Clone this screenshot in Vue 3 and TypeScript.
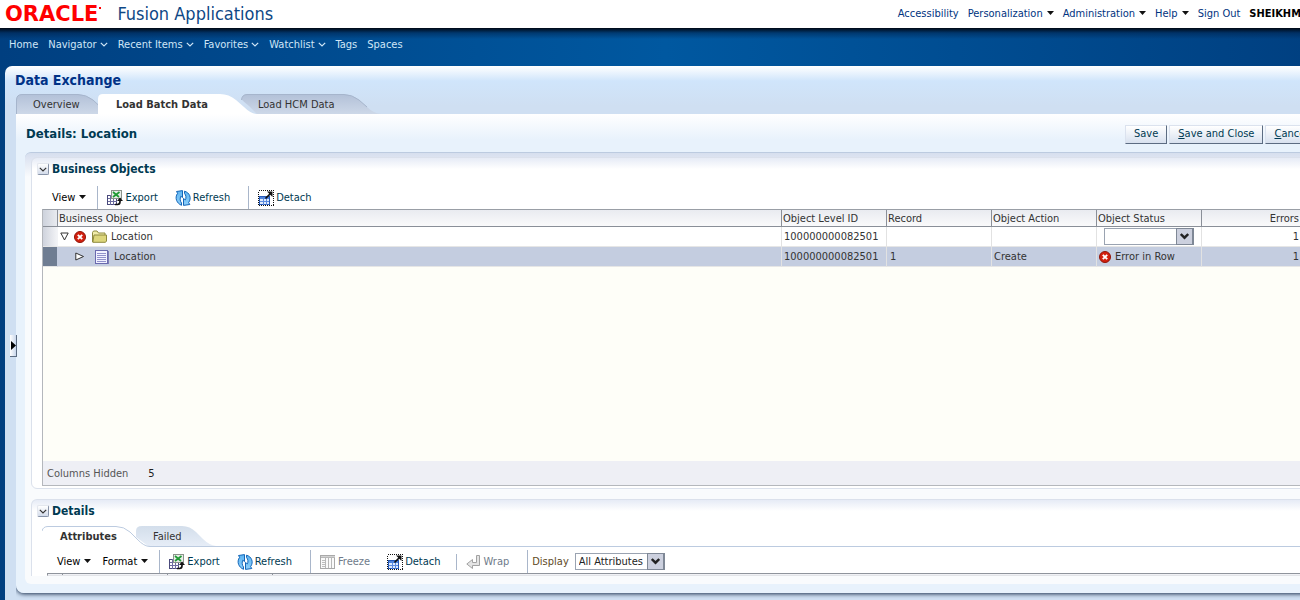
<script setup lang="ts">
import { ref } from 'vue'

interface MenuItem {
  label: string
  menu: boolean
}

interface Row {
  level: number
  id: string
  record: string
  action: string
  status: string
  errors: number
}

const globalLinks: MenuItem[] = [
  { label: 'Accessibility', menu: false },
  { label: 'Personalization', menu: true },
  { label: 'Administration', menu: true },
  { label: 'Help', menu: true },
  { label: 'Sign Out', menu: false },
]

const navLinks: MenuItem[] = [
  { label: 'Home', menu: false },
  { label: 'Navigator', menu: true },
  { label: 'Recent Items', menu: true },
  { label: 'Favorites', menu: true },
  { label: 'Watchlist', menu: true },
  { label: 'Tags', menu: false },
  { label: 'Spaces', menu: false },
]

const rows: Row[] = [
  { level: 0, id: '100000000082501', record: '', action: '', status: '', errors: 1 },
  { level: 1, id: '100000000082501', record: '1', action: 'Create', status: 'Error in Row', errors: 1 },
]

const statusFilter = ref('')
const display = ref('All Attributes')
</script>

<template>
  <svg class="defs" aria-hidden="true">
    <defs>
      <linearGradient id="tabIdle" x1="0" y1="0" x2="0" y2="1">
        <stop offset="0" stop-color="#b3c1d8" />
        <stop offset="1" stop-color="#cdd8e8" />
      </linearGradient>
      <linearGradient id="tabSub" x1="0" y1="0" x2="0" y2="1">
        <stop offset="0" stop-color="#d3deeb" />
        <stop offset="1" stop-color="#e6edf7" />
      </linearGradient>
      <linearGradient id="blueArrow" x1="0" y1="0" x2="0" y2="1">
        <stop offset="0" stop-color="#5db4f2" />
        <stop offset="1" stop-color="#8fd0fa" />
      </linearGradient>
      <symbol id="i-export" viewBox="0 0 16 16">
        <g shape-rendering="crispEdges">
          <path d="M0.5 5.500h9v9h-9z" fill="#fff" stroke="#4a4a7c" />
          <path d="M1 8.500h9M1 11.500h9M3.500 5v10M6.500 5v10" stroke="#6d6da0" fill="none" />
          <path d="M4.500 .5h10v8h-10z" fill="#e9eee9" stroke="#8b938b" />
        </g>
        <path d="M6 2l6 5M12.500 2 6 7" stroke="#1f9a34" stroke-width="1.700" />
        <path d="M8 14.500h2.500q2.500 0 2.500-3V10" stroke="#111" stroke-width="1.700" fill="none" />
        <path d="M10 11 13 7.500l3 3.500z" fill="#111" />
      </symbol>
      <symbol id="i-refresh" viewBox="0 0 16 16">
        <path d="M1.500 1.500 7.500 .6v7L5.800 6.200C4.800 8.500 5 11 6.500 13v2.300C2 13.500 -.8 8 2.600 3.300z" fill="url(#blueArrow)" stroke="#1466b8" />
        <path d="M9.500 1.200C14.500 2.500 17 8 13.600 12.600l1.200 1.900-6.300.9v-7l1.800 1.500c1.100-2 .8-4.500-.8-6.500z" fill="url(#blueArrow)" stroke="#1466b8" />
      </symbol>
      <symbol id="i-detach" viewBox="0 0 16 16">
        <g shape-rendering="crispEdges">
          <path d="M.5.5h15v15H.5z" fill="#fff" stroke="#111" stroke-dasharray="1 1" />
          <path d="M1.500 6.500h10v8h-10z" fill="#dfeafb" stroke="#2559b8" />
          <path d="M2 7h9v2H2z" fill="#4f84dd" />
          <path d="M2 11.500h9M5.500 9v6M8.500 9v6" stroke="#5b8be0" fill="none" />
        </g>
        <path d="M7.500 8.500 13 3" stroke="#111" stroke-width="1.700" />
        <path d="M9 1.500h5.500V7z" fill="#111" />
      </symbol>
      <symbol id="i-freeze" viewBox="0 0 16 16">
        <g shape-rendering="crispEdges">
          <path d="M.5 1.500h14v13H.5z" fill="#fafafa" stroke="#a9a9a9" />
          <path d="M1 2h14v1H1z" fill="#d2d2d2" />
          <path d="M1 3.500h14M5.500 4v10M8.500 4v10M11.500 4v10" stroke="#b8b8b8" fill="none" />
          <path d="M2 6.500h3M2 8.500h3M2 10.500h3M2 12.500h3" stroke="#bdbdbd" fill="none" />
        </g>
      </symbol>
      <symbol id="i-wrap" viewBox="0 0 16 16">
        <path d="M10.500 1.500h3v10h-7v3L.8 10l5.700-4.500v3h4z" fill="#e4e4e4" stroke="#a2a2a2" />
      </symbol>
      <symbol id="i-error" viewBox="0 0 12 12">
        <circle cx="6" cy="6" r="5.500" fill="#d3200f" stroke="#8f1408" />
        <path d="M3.800 3.800l4.400 4.400M8.200 3.800 3.800 8.200" stroke="#fff" stroke-width="1.900" />
      </symbol>
      <symbol id="i-folder" viewBox="0 0 15 13">
        <path d="M.5 12V2.500L1.500 1H5l1.500 2h6.500v2" fill="#f1ecaa" stroke="#8e8a3e" />
        <path d="M.8 12.300 2 5h12.500v6l-1 1.300z" fill="#ddd67c" stroke="#8e8a3e" />
      </symbol>
      <symbol id="i-page" viewBox="0 0 14 14">
        <g shape-rendering="crispEdges">
          <path d="M.5.5h12v13H.5z" fill="#f1f1ff" stroke="#6a6aae" />
          <path d="M13.500 1v13H1" fill="none" stroke="#7e7eb6" />
          <path d="M2 3.500h9M2 5.500h9M2 7.500h9M2 9.500h9M2 11.500h9" stroke="#9191cb" fill="none" />
        </g>
      </symbol>
      <symbol id="i-caret" viewBox="0 0 7 4"><path d="M0 0h7L3.500 4z" fill="currentColor" /></symbol>
      <symbol id="i-chevron" viewBox="0 0 8 5"><path d="M.8.800 4 4 7.200.8" fill="none" stroke="currentColor" stroke-width="1.200" /></symbol>
      <symbol id="i-drop" viewBox="0 0 9 7"><path d="M.8 1 4.500 4.700 8.200 1" fill="none" stroke="#222" stroke-width="2.400" /></symbol>
    </defs>
  </svg>

  <div class="shell">
    <div class="page">
      <header class="brandbar">
        <span class="logo">ORACLE<i></i></span>
        <span class="product">Fusion Applications</span>
        <nav class="global" aria-label="Global">
          <a v-for="l in globalLinks" :key="l.label" href="#">{{ l.label }}<svg v-if="l.menu" class="caret"><use href="#i-caret" /></svg></a>
          <strong>SHEIKHM</strong>
        </nav>
      </header>

      <nav class="menubar" aria-label="Main">
        <a v-for="l in navLinks" :key="l.label" href="#">{{ l.label }}<svg v-if="l.menu" class="chev"><use href="#i-chevron" /></svg></a>
      </nav>

      <main class="workspace">
        <button class="splitter" aria-label="Expand pane"><svg viewBox="0 0 5 9"><path d="M0 0l5 4.500L0 9z" /></svg></button>
        <h1>Data Exchange</h1>
        <div class="tabs" role="tablist">
          <button class="tab overview" role="tab" aria-selected="false">
            <svg viewBox="0 0 100 20"><path d="M.5 20V6Q.5 .5 6 .5H62Q70 .5 77 6L84 12.500Q91 19 100 20z" fill="url(#tabIdle)" /><path d="M.5 20V6Q.5 .5 6 .5H62Q70 .5 77 6L84 12.500" fill="none" stroke="#a6b5cc" /></svg>
            <span>Overview</span>
          </button>
          <button class="tab batch" role="tab" aria-selected="true">
            <svg viewBox="0 0 158 20"><path d="M0 20V5Q0 0 5 0H122Q131 0 138 6L146 13Q152 19 158 20z" fill="#fff" /></svg>
            <span>Load Batch Data</span>
          </button>
          <button class="tab hcm" role="tab" aria-selected="false">
            <svg viewBox="0 0 140 20"><path d="M8 12Q.5 6 .5 5Q1 .5 6 .5H103Q111 .5 118 6L126 13Q132 19 140 20H16z" fill="url(#tabIdle)" /><path d="M.5 6Q1 .5 6 .5H103Q111 .5 118 6L126 13" fill="none" stroke="#a6b5cc" /></svg>
            <span>Load HCM Data</span>
          </button>
        </div>

        <section class="sheet">
          <div class="titlebar">
            <h2>Details: Location</h2>
            <div class="actions">
              <button>Save</button>
              <button><u>S</u>ave and Close</button>
              <button><u>C</u>ancel</button>
            </div>
          </div>

          <div class="well">
            <section class="card objects">
              <header class="cardhead">
                <button class="toggle" aria-label="Collapse Business Objects"><svg><use href="#i-chevron" /></svg></button>
                <h3>Business Objects</h3>
              </header>
              <div class="toolbar">
                <button class="menu">View<svg class="caret"><use href="#i-caret" /></svg></button>
                <span class="sep"></span>
                <button class="tool"><svg><use href="#i-export" /></svg>Export</button>
                <button class="tool"><svg><use href="#i-refresh" /></svg>Refresh</button>
                <span class="sep"></span>
                <button class="tool"><svg><use href="#i-detach" /></svg>Detach</button>
              </div>
              <div class="gridbox">
                <table>
                  <colgroup>
                    <col class="c-head" /><col /><col class="c-std" /><col class="c-std" /><col class="c-std" /><col class="c-std" /><col class="c-std" />
                  </colgroup>
                  <thead>
                    <tr>
                      <th class="rowhead"></th>
                      <th>Business Object</th>
                      <th>Object Level ID</th>
                      <th>Record</th>
                      <th>Object Action</th>
                      <th>Object Status</th>
                      <th class="num">Errors</th>
                    </tr>
                  </thead>
                  <tbody>
                    <tr v-for="r in rows" :key="r.level" :class="{ selected: r.level === 1 }">
                      <td class="rowhead"></td>
                      <td>
                        <div v-if="r.level === 0" class="node">
                          <svg class="tri" viewBox="0 0 9 9"><path d="M.8 1h7.400L4.500 8z" /></svg>
                          <svg class="err"><use href="#i-error" /></svg>
                          <svg class="folder"><use href="#i-folder" /></svg>
                          <span>Location</span>
                        </div>
                        <div v-else class="node child">
                          <svg class="tri" viewBox="0 0 9 9"><path d="M.8 1v7L8.500 4.500z" /></svg>
                          <svg class="doc"><use href="#i-page" /></svg>
                          <span>Location</span>
                        </div>
                      </td>
                      <td>{{ r.id }}</td>
                      <td class="rec">{{ r.record }}</td>
                      <td>{{ r.action }}</td>
                      <td>
                        <span v-if="r.level === 0" class="combo filter">
                          <select v-model="statusFilter" aria-label="Object Status"><option value=""></option></select>
                          <span class="arrow"><svg><use href="#i-drop" /></svg></span>
                        </span>
                        <span v-else class="state"><svg class="err"><use href="#i-error" /></svg>{{ r.status }}</span>
                      </td>
                      <td class="num">{{ r.errors }}</td>
                    </tr>
                  </tbody>
                </table>
                <div class="status"><span>Columns Hidden</span><b>5</b></div>
              </div>
            </section>

            <section class="card details">
              <header class="cardhead">
                <button class="toggle" aria-label="Collapse Details"><svg><use href="#i-chevron" /></svg></button>
                <h3>Details</h3>
              </header>
              <div class="subtabs" role="tablist">
                <button class="subtab attrs" role="tab" aria-selected="true">
                  <svg viewBox="0 0 108 21"><path d="M0 21V5Q1 .5 6 .5H74Q82 .5 88 6L95 13Q102 20 108 20.500V21z" fill="#fff" /><path d="M0 5Q1 .5 6 .5H74Q82 .5 88 6L95 13Q102 20.500 108 20.500" fill="none" stroke="#bccbe0" /></svg>
                  <span>Attributes</span>
                </button>
                <button class="subtab failed" role="tab" aria-selected="false">
                  <svg viewBox="0 0 80 20"><path d="M0 11V5Q0 0 6 0H46Q54 0 60 6L67 13Q73 19 80 20H12z" fill="url(#tabSub)" /></svg>
                  <span>Failed</span>
                </button>
              </div>
              <div class="toolbar lower">
                <button class="menu">View<svg class="caret"><use href="#i-caret" /></svg></button>
                <button class="menu">Format<svg class="caret"><use href="#i-caret" /></svg></button>
                <span class="sep"></span>
                <button class="tool"><svg><use href="#i-export" /></svg>Export</button>
                <button class="tool"><svg><use href="#i-refresh" /></svg>Refresh</button>
                <span class="sep"></span>
                <button class="tool" disabled><svg><use href="#i-freeze" /></svg>Freeze</button>
                <button class="tool"><svg><use href="#i-detach" /></svg>Detach</button>
                <span class="sep short"></span>
                <button class="tool" disabled><svg><use href="#i-wrap" /></svg>Wrap</button>
                <span class="sep"></span>
                <label for="display">Display</label>
                <span class="combo">
                  <select id="display" v-model="display"><option>All Attributes</option></select>
                  <span class="arrow"><svg><use href="#i-drop" /></svg></span>
                </span>
              </div>
              <div class="peek"><i></i><i></i><i></i></div>
            </section>
          </div>
        </section>
      </main>
    </div>
  </div>
</template>

<style>
body {
  margin: 0;
  overflow: hidden;
}
</style>

<style scoped>
* {
  box-sizing: border-box;
}
.defs {
  position: absolute;
  width: 0;
  height: 0;
}
.shell {
  overflow: hidden;
  font: 11px/14px "DejaVu Sans Condensed", "Noto Sans", sans-serif;
  color: #333;
}
.page {
  display: flex;
  flex-direction: column;
  min-height: 100vh;
  margin-right: -30px;
  background: linear-gradient(90deg, #003f80, #0058a0 50%, #003f80);
}
button,
select {
  font: inherit;
  color: inherit;
  padding: 0;
  margin: 0;
  border: 0;
  background: none;
}
a {
  text-decoration: none;
  white-space: nowrap;
}
h1,
h2,
h3 {
  margin: 0;
}
.caret {
  width: 7px;
  height: 4px;
  margin-left: 4px;
  color: #111;
  vertical-align: 2px;
}

.brandbar {
  display: flex;
  align-items: center;
  height: 28px;
  padding: 0 29px 0 5px;
  background: #fff;
}
.logo {
  display: flex;
  font: bold 21px/28px "DejaVu Sans", sans-serif;
  color: #f00;
}
.logo i {
  width: 2px;
  height: 2px;
  margin: 7px 0 0 1px;
  background: #f00;
}
.product {
  margin-left: 16px;
  font-size: 18px;
  line-height: 28px;
  color: #0f4886;
  white-space: nowrap;
}
.global {
  display: flex;
  gap: 9px;
  margin-left: auto;
}
.global a {
  color: #003380;
}
.global strong {
  color: #000;
}

.menubar {
  display: flex;
  gap: 10px;
  height: 38px;
  padding: 10px 9px 0;
  background: linear-gradient(#000814, #00204880 5px, transparent 11px);
}
.menubar a {
  color: #cfe6f7;
}
.chev {
  width: 8px;
  height: 5px;
  margin-left: 3px;
  vertical-align: 1px;
}

.workspace {
  position: relative;
  flex: 1;
  display: flex;
  flex-direction: column;
  margin-left: 5px;
  padding-bottom: 7px;
  border-radius: 7px 0 0 0;
  background: linear-gradient(#fff, #d0e5fb 15px, #cfdff2 40px);
}
.splitter {
  position: absolute;
  z-index: 2;
  left: 5px;
  top: 269px;
  width: 7px;
  height: 22px;
  display: flex;
  align-items: center;
  background: linear-gradient(90deg, #fff, #c9d7ec);
  border-right: 1px solid #5c6c82;
  border-bottom: 1px solid #5c6c82;
}
.splitter svg {
  width: 5px;
  height: 9px;
  margin-left: 1px;
}
h1 {
  height: 28px;
  padding-left: 10px;
  font-size: 14px;
  line-height: 28px;
  color: #003286;
}
.tabs {
  display: flex;
  height: 20px;
  margin-left: 11px;
}
.tab,
.subtab {
  position: relative;
  height: 20px;
  padding-top: 2px;
  text-align: left;
  white-space: nowrap;
}
.tab svg,
.subtab svg {
  position: absolute;
  left: 0;
  top: 0;
  height: 20px;
}
.tab span,
.subtab span {
  position: relative;
}
.overview {
  width: 82px;
  padding-left: 17px;
}
.overview svg {
  width: 100px;
}
.batch {
  z-index: 1;
  width: 143px;
  padding-left: 18px;
  font-weight: bold;
}
.batch svg {
  width: 158px;
}
.hcm {
  width: 140px;
  padding-left: 17px;
}
.hcm svg {
  width: 140px;
}

.sheet {
  flex: 1;
  display: flex;
  flex-direction: column;
  margin-left: 11px;
  padding: 0 9px 9px;
  border-radius: 0 0 0 8px;
  background: linear-gradient(#fff, #e8f2fc 26px);
  box-shadow: 0 1px 4px #1c2f4d;
  clip-path: inset(0 0 -7px 0);
}
.titlebar {
  display: flex;
  align-items: center;
  justify-content: space-between;
  height: 38px;
  padding: 2px 0 0 1px;
}
h2 {
  font-size: 13px;
  color: #003a52;
}
.actions {
  display: flex;
  gap: 2px;
  margin-right: 4px;
}
.actions button {
  height: 19px;
  padding: 0 8px;
  border: 1px solid #dbe2ee;
  border-right-color: #5c6c82;
  border-bottom-color: #5c6c82;
  background: linear-gradient(#fff, #d8e1ef);
  color: #003a52;
}

.well {
  flex: 1;
  display: flex;
  flex-direction: column;
  gap: 10px;
  padding: 4px 6px 8px;
  border-top: 1px solid #bccbe0;
  border-radius: 6px 0 0 6px;
  background: linear-gradient(#d6dfee, #dce3f1 4px, #f9fbfd 24px);
}
.card {
  display: flex;
  flex-direction: column;
  border: 1px solid #dbe1ec;
  border-radius: 6px;
  background: linear-gradient(#e6ebf6, #fff 11px);
}
.objects {
  flex: 1;
  padding: 0 6px 2px 10px;
}
.details {
  height: 77px;
  border-bottom: 0;
  border-radius: 6px 6px 0 0;
  padding: 0 6px 0 10px;
}
.cardhead {
  display: flex;
  align-items: center;
  gap: 3px;
  height: 22px;
  margin-left: -5px;
}
.toggle {
  display: flex;
  align-items: center;
  justify-content: center;
  width: 12px;
  height: 12px;
  border: 1px solid #e3e7ee;
  border-right-color: #8793a8;
  border-bottom-color: #8793a8;
  border-radius: 2px;
  background: linear-gradient(#fff, #d3dbea);
}
.toggle svg {
  width: 8px;
  height: 5px;
}
h3 {
  font-size: 12px;
  color: #003a52;
}

.toolbar {
  display: flex;
  align-items: center;
  height: 23px;
  margin-top: 6px;
  padding-left: 10px;
  color: #003a52;
  white-space: nowrap;
}
.menu {
  color: #000;
}
.menu + .menu {
  margin-left: 11px;
}
.sep {
  width: 1px;
  height: 23px;
  margin: 0 9px 0 11px;
  background: #a9b6ca;
}
.sep.short {
  height: 16px;
  margin-left: 8px;
}
.tool {
  display: flex;
  align-items: center;
  gap: 2px;
  margin-right: 7px;
}
.tool + .tool {
  margin-left: 10px;
}
.tool svg {
  width: 16px;
  height: 16px;
}
.tool:disabled {
  color: #6f7b8a;
}

.gridbox {
  flex: 1;
  display: flex;
  flex-direction: column;
  border: 1px solid #b4b7bc;
  border-top-color: #999ea6;
  background: #fefef8;
}
table {
  width: 100%;
  table-layout: fixed;
  border-collapse: separate;
  border-spacing: 0;
}
.c-head {
  width: 15px;
}
.c-std {
  width: 105px;
}
th,
td {
  padding: 0 2px;
  font-weight: normal;
  text-align: left;
  white-space: nowrap;
  border-right: 1px solid #e2e2e2;
}
th {
  height: 17px;
  padding: 2px 1px 0;
  border-right-color: #8a8f98;
  border-bottom: 1px solid #8a8f98;
  background: linear-gradient(#e9ebf0, #fafafb);
}
td {
  height: 20px;
  border-bottom: 1px solid #e6e6e6;
  background: #fff;
}
tbody .rowhead {
  background: linear-gradient(90deg, #cfd3dd, #f2f3f6);
  border-right-color: #f2f3f6;
}
thead .rowhead {
  background: linear-gradient(90deg, #cdd2dc, #e9ebf0);
}
.selected td {
  background: #c4cde0;
}
.selected .rowhead {
  background: #6f7d92;
  border-right-color: #c4cde0;
}
.rec {
  padding-left: 3px;
}
.num {
  padding-right: 8px;
  text-align: right;
  border-right: 0;
}
.node {
  display: flex;
  align-items: center;
}
.node.child {
  padding-left: 15px;
}
.tri {
  width: 9px;
  height: 9px;
  fill: #fff;
  stroke: #333;
}
.err {
  width: 12px;
  height: 12px;
}
.node .err {
  margin-left: 5px;
}
.folder {
  width: 15px;
  height: 13px;
  margin: 0 4px 0 6px;
}
.doc {
  width: 14px;
  height: 14px;
  margin: 0 5px 0 11px;
}
.state {
  display: flex;
  align-items: center;
  gap: 4px;
}
.combo {
  position: relative;
  display: flex;
  height: 17px;
}
.combo select {
  appearance: none;
  height: 17px;
  padding: 0 20px 0 3px;
  border: 1px solid #9aa3b1;
  border-radius: 0;
  background: #fff;
  color: #222;
}
.filter {
  width: 90px;
  margin-left: 5px;
}
.filter select {
  width: 90px;
}
.arrow {
  position: absolute;
  right: 0;
  top: 0;
  display: flex;
  align-items: center;
  justify-content: center;
  width: 18px;
  height: 17px;
  border: 1px solid #7f8896;
  border-right-width: 2px;
  background: #ccd0de;
  pointer-events: none;
}
.arrow svg {
  width: 9px;
  height: 7px;
}
.status {
  display: flex;
  align-items: center;
  gap: 20px;
  height: 24px;
  margin-top: auto;
  padding: 2px 0 0 4px;
  background: #eeeff5;
  color: #555;
}
.status b {
  font-weight: normal;
  color: #222;
}

.subtabs {
  display: flex;
  height: 21px;
  margin-top: 4px;
  border-bottom: 1px solid #bccbe0;
}
.subtab svg {
  height: 21px;
}
.attrs {
  z-index: 1;
  width: 94px;
  padding-left: 18px;
  font-weight: bold;
}
.attrs svg {
  width: 108px;
}
.failed {
  width: 80px;
  padding-left: 17px;
}
.failed svg {
  width: 80px;
  height: 20px;
}
.lower {
  margin-top: 3px;
  padding-left: 15px;
}
.lower label {
  margin-left: -5px;
  margin-right: 6px;
  color: #5e4a1e;
}
.peek {
  display: flex;
  height: 3px;
  margin-left: 5px;
  border: 1px solid #8f949c;
  border-bottom-color: #e2e4e8;
  background: #f0f1f5;
}
.peek i {
  width: 105px;
  border-right: 1px solid #8f949c;
}
.peek i:first-child {
  width: 15px;
}
</style>
